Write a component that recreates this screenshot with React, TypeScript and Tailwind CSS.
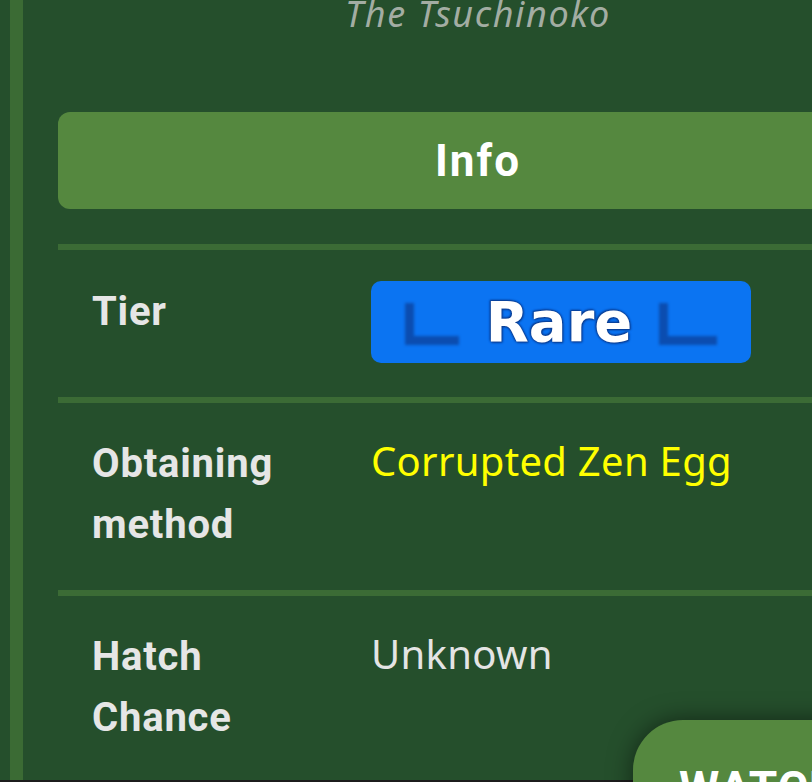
import React from 'react';

const rows = [
    { label: ['Obtaining', 'method'], value: 'Corrupted Zen Egg', color: 'text-[#ffff00]' },
    { label: ['Hatch', 'Chance'], value: 'Unknown', color: 'text-[#e4e4e4]' },
];

const Divider = () => <div className="h-[6px] bg-[#3b6b35]" />;

const RareBadge = () => (
    <div className="flex h-[82px] w-[380px] items-center justify-between rounded-[10px] bg-[#0b74f2] px-[34px]">
        <span className="mt-[4px] h-[42px] w-[54px] border-b-[9px] border-l-[9px] border-[#0b4db0] blur-[1.5px]" />
        <span className="font-['DejaVu_Sans',sans-serif] text-[56px] font-bold leading-none text-white [text-shadow:0_0_2px_#0a3d93,0_0_3px_#0a3d93,1px_1px_2px_#0a3d93,-1px_-1px_2px_#0a3d93]">
            Rare
        </span>
        <span className="mt-[4px] h-[42px] w-[58px] border-b-[9px] border-l-[9px] border-[#0b4db0] blur-[1.5px]" />
    </div>
);

const App = () => {
    return (
        <div className="relative h-[782px] w-[812px] overflow-hidden bg-[#254f2c] font-['Roboto',sans-serif]">
            <div className="flex h-[780px]">
                <div className="ml-[10px] w-[13px] shrink-0 bg-[#3b6b34]" />
                <div className="ml-[35px] w-[840px] shrink-0">
                    <p className="-mt-[6px] text-center font-['Noto_Sans',sans-serif] text-[36px] italic leading-[40px] tracking-[1.6px] text-[#a3ada3]">
                        The Tsuchinoko
                    </p>
                    <div className="mt-[78px] flex h-[97px] items-center justify-center rounded-[12px] bg-[#55883f]">
                        <span className="text-[44px] font-bold tracking-[2px] text-white">Info</span>
                    </div>
                    <div className="mt-[35px]">
                        <Divider />
                        <div className="flex pb-[34px] pl-[34px] pt-[31px]">
                            <div className="w-[279px] text-[40px] font-bold leading-[61px] tracking-[0.8px] text-[#e6e6e6]">
                                Tier
                            </div>
                            <RareBadge />
                        </div>
                        {rows.map((row, index) => (
                            <div key={index}>
                                <Divider />
                                <div className="flex pb-[35px] pl-[34px] pt-[30px]">
                                    <div className="w-[279px] text-[40px] font-bold leading-[61px] tracking-[0.8px] text-[#e6e6e6]">
                                        {row.label[0]}
                                        <br />
                                        {row.label[1]}
                                    </div>
                                    <div className={`-mt-[3px] font-['Noto_Sans',sans-serif] text-[40px] leading-[61px] tracking-[0.3px] ${row.color}`}>
                                        {row.value}
                                    </div>
                                </div>
                            </div>
                        ))}
                    </div>
                </div>
            </div>
            <div className="h-[2px] bg-[#1c1c1c]" />

            <div className="absolute left-[633px] top-[720px] h-[120px] w-[300px] rounded-[50px] bg-[#55883f] pl-[46px] pt-[34px] shadow-[0_0_24px_rgba(0,0,0,0.5)]">
                <span className="text-[46px] font-bold tracking-wide text-white">WATCH</span>
            </div>
        </div>
    );
};

export default App;
